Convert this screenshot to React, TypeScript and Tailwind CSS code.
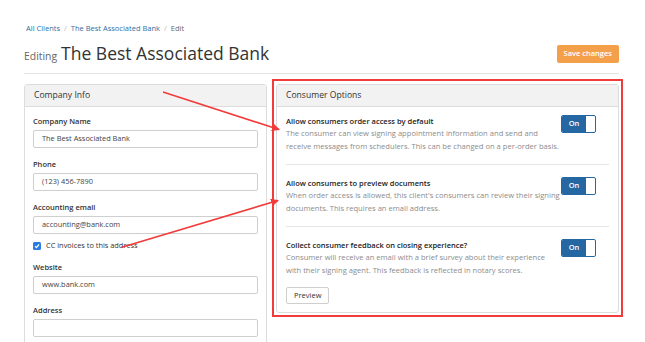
import React from "react";

const fieldLabel = "block text-[7.5px] leading-[12px] font-semibold text-[#333]";
const fieldInput =
	"mt-[3px] flex h-[18px] w-full items-center rounded-[2px] border border-[#cfcfcf] px-[8px] text-[7.4px] text-[#444]";

const Field = ({ label, value, className = "" }: { label: string; value?: string; className?: string }) => {
	return (
		<div className={className}>
			<span className={fieldLabel}>{label}</span>
			<div className={fieldInput}>{value}</div>
		</div>
	);
};

const Toggle = () => {
	return (
		<div className="flex h-[18px] w-[35px] shrink-0 overflow-hidden rounded-[2px] border border-[#2467a3]">
			<div className="flex flex-1 items-center justify-center bg-[#2467a3] text-[7.5px] font-semibold text-white">
				On
			</div>
			<div className="w-[9px] rounded-r-[2px] bg-white" />
		</div>
	);
};

interface OptionProps {
	title: string;
	lines: string[];
	last?: boolean;
	children?: React.ReactNode;
}

const Option = ({ title, lines, last, children }: OptionProps) => {
	return (
		<div className={`flex ${last ? "pt-[12px]" : "border-b border-[#e6e6e6] py-[12px]"} first:pt-[8px]`}>
			<div className="min-w-0 flex-1">
				<p className="text-[7.5px] leading-[12px] font-semibold text-[#222]">{title}</p>
				{lines.map((l) => (
					<p key={l} className="whitespace-nowrap text-[7.6px] leading-[12.5px] text-[#8c8c8c]">
						{l}
					</p>
				))}
				{children}
			</div>
			<div className="mr-[13px]">
				<Toggle />
			</div>
		</div>
	);
};

const Arrows = () => {
	return (
		<svg className="pointer-events-none absolute left-0 top-0" width="645" height="342" viewBox="0 0 645 342">
			<defs>
				<marker id="head" markerWidth="8" markerHeight="8" refX="7" refY="4" orient="auto" markerUnits="userSpaceOnUse">
					<path d="M0,0 L8,4 L0,8 z" fill="#f23b3b" />
				</marker>
			</defs>
			<line x1="163" y1="92" x2="279" y2="129.5" stroke="#f23b3b" strokeWidth="1.6" markerEnd="url(#head)" />
			<line x1="121" y1="247.5" x2="278" y2="200.5" stroke="#f23b3b" strokeWidth="1.6" markerEnd="url(#head)" />
		</svg>
	);
};

export default function App() {
	return (
		<div
			className="relative h-[342px] w-[645px] overflow-hidden bg-white"
			style={{ fontFamily: '"Open Sans", "Liberation Sans", sans-serif' }}
		>
			<div className="pl-[24px] pr-[26px] pt-[22px]">
				<nav className="flex items-center gap-[4px] pl-[2px] text-[7.5px] leading-[12px]">
					<span className="text-[#2f6ea5]">All Clients</span>
					<span className="text-[#bbb]">/</span>
					<span className="text-[#2f6ea5]">The Best Associated Bank</span>
					<span className="text-[#bbb]">/</span>
					<span className="text-[#666]">Edit</span>
				</nav>

				<div className="mt-[7px] flex items-end justify-between border-b border-[#e2e2e2] pb-[8px]">
					<h1 className="flex items-baseline gap-[4px] text-[#333]">
						<span className="text-[10.4px] text-[#666]">Editing</span>
						<span className="text-[17.5px] leading-[24px]">The Best Associated Bank</span>
					</h1>
					<button className="mb-[2px] h-[18px] rounded-[2px] bg-[#f4a04b] px-[7px] text-[7.5px] font-semibold text-white">
						Save changes
					</button>
				</div>

				<div className="mt-[10px] flex items-start">
					<section className="w-[243px] rounded-t-[3px] border border-[#dcdcdc]">
						<header className="flex h-[22px] items-center border-b border-[#dcdcdc] bg-[#f2f2f2] px-[9px] text-[8.6px] text-[#333]">
							Company Info
						</header>
						<div className="px-[8px] pt-[8px] pb-[20px]">
							<Field label="Company Name" value="The Best Associated Bank" />
							<Field className="mt-[10px]" label="Phone" value="(123) 456-7890" />
							<Field className="mt-[10px]" label="Accounting email" value="accounting@bank.com" />
							<label className="mt-[6px] flex h-[12px] items-center gap-[5px] text-[7.4px] text-[#333]">
								<span className="flex h-[8px] w-[8px] items-center justify-center rounded-[1.5px] bg-[#2a7be0]">
									<svg width="6" height="6" viewBox="0 0 6 6">
										<path d="M1 3.2 L2.4 4.6 L5 1.5" stroke="white" strokeWidth="1.2" fill="none" />
									</svg>
								</span>
								CC invoices to this address
							</label>
							<Field className="mt-[9px]" label="Website" value="www.bank.com" />
							<Field className="mt-[10px]" label="Address" />
						</div>
					</section>

					<div className="relative ml-[9px] flex-1">
						<div className="pointer-events-none absolute -bottom-[4px] -left-[4px] -right-[4px] -top-[5px] border-2 border-[#f23b3b]" />
						<section className="rounded-[3px] border border-[#dcdcdc]">
							<header className="flex h-[22px] items-center border-b border-[#dcdcdc] bg-[#f2f2f2] px-[9px] text-[8.6px] text-[#333]">
								Consumer Options
							</header>
							<div className="pl-[9px] pr-[9px] pb-[8px]">
								<Option
									title="Allow consumers order access by default"
									lines={[
										"The consumer can view signing appointment information and send and",
										"receive messages from schedulers. This can be changed on a per-order basis.",
									]}
								/>
								<Option
									title="Allow consumers to preview documents"
									lines={[
										"When order access is allowed, this client's consumers can review their signing",
										"documents. This requires an email address.",
									]}
								/>
								<Option
									last
									title="Collect consumer feedback on closing experience?"
									lines={[
										"Consumer will receive an email with a brief survey about their experience",
										"with their signing agent. This feedback is reflected in notary scores.",
									]}
								>
									<button className="mt-[11px] h-[17px] rounded-[2px] border border-[#cfcfcf] px-[7px] text-[7.5px] text-[#333]">
										Preview
									</button>
								</Option>
							</div>
						</section>
					</div>
				</div>
			</div>
			<Arrows />
		</div>
	);
}
